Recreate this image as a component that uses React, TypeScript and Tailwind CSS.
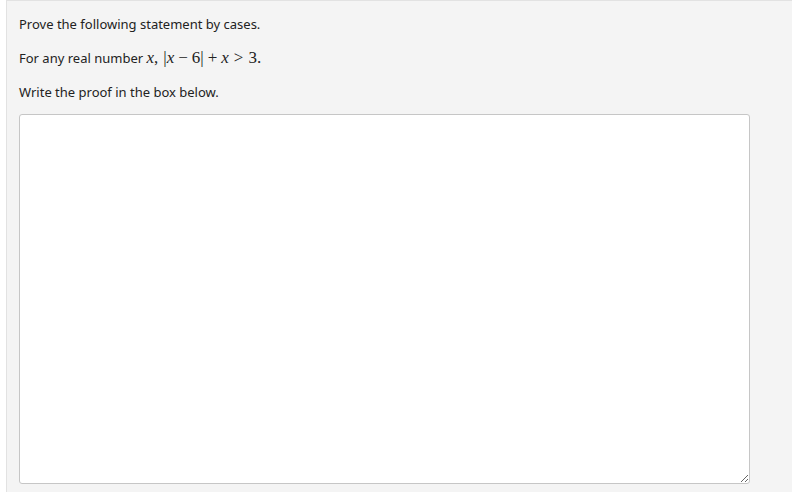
import React from "react";

const I = ({ children }: { children: React.ReactNode }) => (
  <span className="italic">{children}</span>
);

export default function App() {
  return (
    <div className="w-[792px] h-[492px] bg-white pl-[6px] overflow-hidden">
      <div className="h-full bg-[#f4f4f4] border-l border-t border-[#e2e2e2] pl-[12px] pt-[13px] text-[13px] text-[#222] [font-family:'Noto_Sans',sans-serif]">
        <p className="leading-[20px] h-[20px]">Prove the following statement by cases.</p>
        <p className="leading-[20px] h-[20px] mt-[14px] flex items-baseline">
          <span>For any real number&nbsp;</span>
          <span className="[font-family:'Liberation_Serif',serif] text-[17px] flex items-baseline">
            <I>x</I>
            <span>,</span>
            <span className="ml-[5px]">|</span>
            <I>x</I>
            <span className="mx-[4px]">−</span>
            <span>6</span>
            <span>|</span>
            <span className="mx-[4px]">+</span>
            <I>x</I>
            <span className="mx-[5px]">&gt;</span>
            <span>3.</span>
          </span>
        </p>
        <p className="leading-[20px] h-[20px] mt-[14px]">Write the proof in the box below.</p>
        <textarea className="block mt-[12px] w-[731px] h-[370px] bg-white border border-[#c6c6c6] rounded-[3px] outline-none resize" />
      </div>
    </div>
  );
}
